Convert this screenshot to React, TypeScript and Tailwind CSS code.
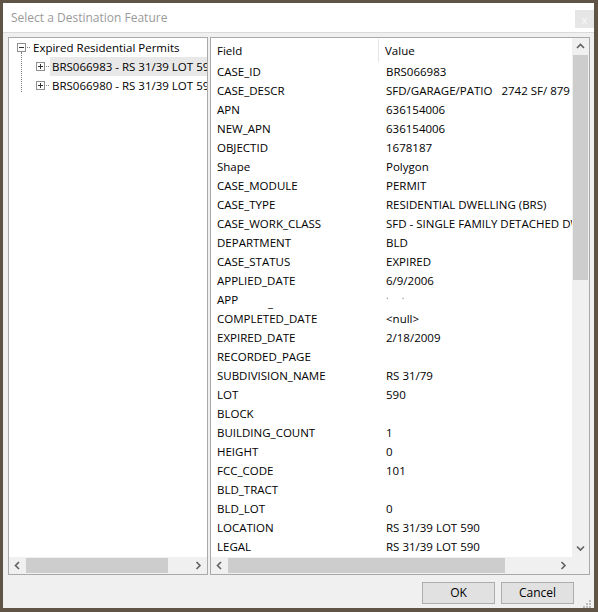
import React from 'react';

const rows: [string, string][] = [
  ['CASE_ID', 'BRS066983'],
  ['CASE_DESCR', 'SFD/GARAGE/PATIO   2742 SF/ 879 SF GARAGE'],
  ['APN', '636154006'],
  ['NEW_APN', '636154006'],
  ['OBJECTID', '1678187'],
  ['Shape', 'Polygon'],
  ['CASE_MODULE', 'PERMIT'],
  ['CASE_TYPE', 'RESIDENTIAL DWELLING (BRS)'],
  ['CASE_WORK_CLASS', 'SFD - SINGLE FAMILY DETACHED DWELLING'],
  ['DEPARTMENT', 'BLD'],
  ['CASE_STATUS', 'EXPIRED'],
  ['APPLIED_DATE', '6/9/2006'],
  ['APP', ''],
  ['COMPLETED_DATE', '<null>'],
  ['EXPIRED_DATE', '2/18/2009'],
  ['RECORDED_PAGE', ''],
  ['SUBDIVISION_NAME', 'RS 31/79'],
  ['LOT', '590'],
  ['BLOCK', ''],
  ['BUILDING_COUNT', '1'],
  ['HEIGHT', '0'],
  ['FCC_CODE', '101'],
  ['BLD_TRACT', ''],
  ['BLD_LOT', '0'],
  ['LOCATION', 'RS 31/39 LOT 590'],
  ['LEGAL', 'RS 31/39 LOT 590'],
];

const Chevron = ({ dir }: { dir: 'up' | 'down' | 'left' | 'right' }) => {
  const pts = {
    up: '1,6 4.5,2.5 8,6',
    down: '1,2.5 4.5,6 8,2.5',
    left: '6,1 2.5,4.5 6,8',
    right: '2.5,1 6,4.5 2.5,8',
  }[dir];
  return (
    <svg width="9" height="9" viewBox="0 0 9 9">
      <polyline points={pts} fill="none" stroke="#606060" strokeWidth="1.6" />
    </svg>
  );
};

const TreeBox = ({ open }: { open: boolean }) => (
  <svg width="9" height="9" viewBox="0 0 9 9" className="shrink-0">
    <rect x="0.5" y="0.5" width="8" height="8" fill="#fff" stroke="#8f8f8f" />
    <line x1="2" y1="4.5" x2="7" y2="4.5" stroke="#333" />
    {!open && <line x1="4.5" y1="2" x2="4.5" y2="7" stroke="#333" />}
  </svg>
);

const Dots = () => (
  <span className="w-[3px] border-t border-dotted border-[#808080] mx-[1px] shrink-0" />
);

export default function App() {
  return (
    <div
      className="w-[598px] h-[612px] bg-[#5f5446] pt-[3px] pl-[3px] overflow-hidden"
      style={{ fontFamily: '"Open Sans", "Noto Sans", sans-serif' }}
    >
      <div className="w-[591px] h-[605px] bg-[#f0f0f0] flex flex-col text-[11.5px] text-black">
        {/* title bar */}
        <div className="h-[30px] bg-white border-b border-[#dadada] flex items-start justify-between shrink-0">
          <span className="pl-[8px] pt-[7px] text-[#9a9a9a] leading-[16px] text-[12px]">Select a Destination Feature</span>
          <div className="mt-[7px] mr-[0px] w-[19px] h-[18px] bg-[#e6e6e6] flex items-center justify-center text-[#f8f8f8] text-[11px] leading-none">
            x
          </div>
        </div>

        {/* panels */}
        <div className="flex mt-[4px] pl-[5px] h-[538px] shrink-0">
          {/* tree panel */}
          <div className="w-[200px] h-full border border-[#a9a9a9] bg-white flex flex-col">
            <div className="flex-1 overflow-hidden relative">
              <div className="h-[19px] flex items-center pl-[8px] whitespace-pre">
                <TreeBox open />
                <Dots />
                <span className="ml-[2px]">Expired Residential Permits</span>
              </div>
              <div className="absolute left-[12px] top-[14px] h-[40px] border-l border-dotted border-[#808080]" />
              <div className="h-[19px] flex items-center pl-[27px] whitespace-pre">
                <TreeBox open={false} />
                <Dots />
                <span className="bg-[#e8e8e8] pl-[2px] flex-1 h-full flex items-center">BRS066983 - RS 31/39 LOT 590</span>
              </div>
              <div className="h-[19px] flex items-center pl-[27px] whitespace-pre">
                <TreeBox open={false} />
                <Dots />
                <span className="pl-[2px]">BRS066980 - RS 31/39 LOT 591</span>
              </div>
            </div>
            <div className="h-[17px] bg-[#f0f0f0] flex items-center shrink-0">
              <div className="w-[17px] flex justify-center"><Chevron dir="left" /></div>
              <div className="w-[142px] h-[15px] bg-[#cdcdcd]" />
              <div className="flex-1" />
              <div className="w-[17px] flex justify-center"><Chevron dir="right" /></div>
            </div>
          </div>

          <div className="w-[2px]" />

          {/* grid panel */}
          <div className="w-[380px] h-full border border-[#a9a9a9] bg-white flex flex-col">
            <div className="flex flex-1 min-h-0">
              <div className="flex-1 min-w-0 overflow-hidden">
                <div className="h-[24px] flex pt-[1px]">
                  <div className="w-[168px] pl-[6px] flex items-center border-r border-[#e5e5e5]">Field</div>
                  <div className="pl-[6px] flex items-center">Value</div>
                </div>
                {rows.map(([f, v]) => (
                  <div key={f} className="h-[19px] flex items-center whitespace-pre">
                    <div className="w-[168px] pl-[6px] shrink-0">
                      {f === 'APP' ? (
                        <span>
                          APP<span className="ml-[30px] relative top-[3px]">_</span>
                        </span>
                      ) : (
                        f
                      )}
                    </div>
                    <div className="pl-[7px]">
                      {f === 'APP' ? (
                        <span className="text-[#888] relative -top-[5px] text-[10px]">.{'     '}.</span>
                      ) : (
                        v
                      )}
                    </div>
                  </div>
                ))}
              </div>
              {/* vertical scrollbar */}
              <div className="w-[17px] bg-[#f0f0f0] flex flex-col items-center shrink-0">
                <div className="h-[17px] flex items-center justify-center"><Chevron dir="up" /></div>
                <div className="w-[15px] h-[225px] bg-[#cdcdcd]" />
                <div className="flex-1" />
                <div className="h-[17px] flex items-center justify-center"><Chevron dir="down" /></div>
              </div>
            </div>
            {/* horizontal scrollbar */}
            <div className="h-[17px] bg-[#f0f0f0] flex items-center shrink-0">
              <div className="w-[17px] flex justify-center"><Chevron dir="left" /></div>
              <div className="w-[277px] h-[15px] bg-[#cdcdcd]" />
              <div className="flex-1" />
              <div className="w-[17px] flex justify-center"><Chevron dir="right" /></div>
              <div className="w-[17px]" />
            </div>
          </div>
        </div>

        {/* buttons */}
        <div className="flex justify-end gap-[6px] pr-[20px] mt-[7px] relative">
          <button className="w-[73px] h-[22px] bg-[#e1e1e1] border border-[#adadad] leading-none text-[12px]">OK</button>
          <button className="w-[73px] h-[22px] bg-[#e1e1e1] border border-[#adadad] leading-none text-[12px]">Cancel</button>
          <svg width="10" height="10" viewBox="0 0 10 10" className="absolute right-[2px] top-[17px]">
            <rect x="7" y="1" width="2" height="2" fill="#bcbcbc" />
            <rect x="4" y="4" width="2" height="2" fill="#bcbcbc" />
            <rect x="7" y="4" width="2" height="2" fill="#bcbcbc" />
            <rect x="1" y="7" width="2" height="2" fill="#bcbcbc" />
            <rect x="4" y="7" width="2" height="2" fill="#bcbcbc" />
            <rect x="7" y="7" width="2" height="2" fill="#bcbcbc" />
          </svg>
        </div>
      </div>
    </div>
  );
}
